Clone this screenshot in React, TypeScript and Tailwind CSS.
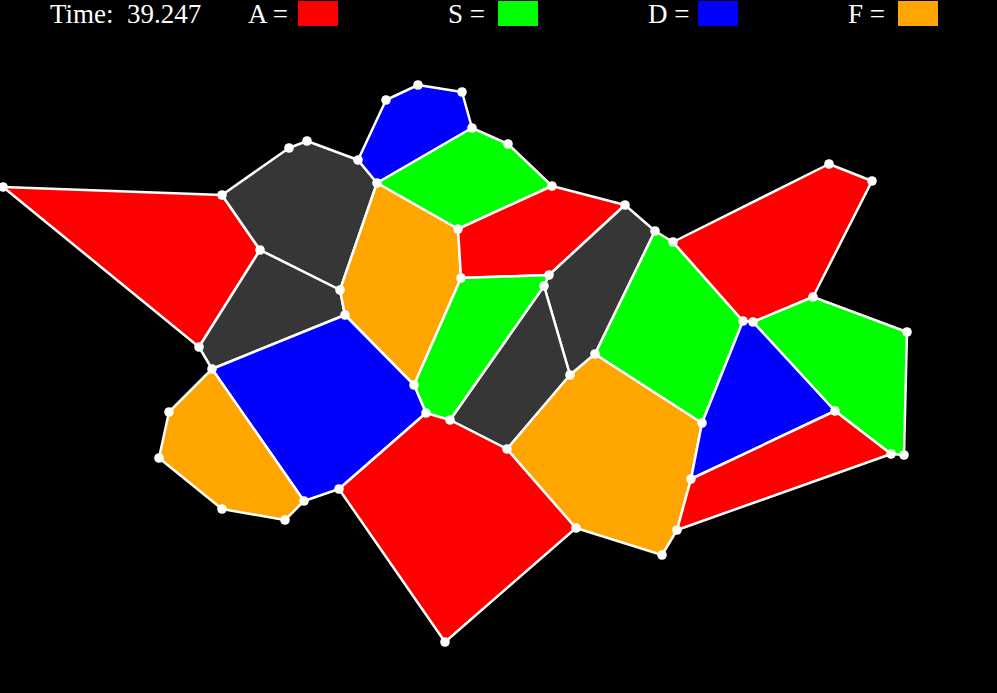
const RED = '#ff0000'
const GREEN = '#00ff00'
const BLUE = '#0000ff'
const ORANGE = '#ffa500'
const GRAY = '#363636'

type Cell = { fill: string; pts: [number, number][] }

// cells of the map, in page coordinates
const CELLS: Cell[] = [
  { fill: RED, pts: [[3, 187], [222, 195], [260, 250], [199, 347]] },
  { fill: GRAY, pts: [[222, 195], [289, 148], [307, 141], [358, 160], [377, 183], [340, 290], [260, 250]] },
  { fill: GRAY, pts: [[260, 250], [340, 290], [345, 315], [212, 369], [199, 347]] },
  { fill: BLUE, pts: [[386, 100], [418, 85], [462, 92], [472, 128], [377, 183], [358, 160]] },
  { fill: GREEN, pts: [[377, 183], [472, 128], [508, 144], [552, 186], [458, 229]] },
  { fill: ORANGE, pts: [[377, 183], [458, 229], [461, 278], [414, 385], [345, 315], [340, 290]] },
  { fill: RED, pts: [[458, 229], [552, 186], [625, 205], [549, 275], [461, 278]] },
  { fill: GRAY, pts: [[625, 205], [655, 231], [595, 354], [570, 375], [544, 286], [549, 275]] },
  { fill: GRAY, pts: [[544, 286], [570, 375], [507, 449], [450, 420]] },
  { fill: GREEN, pts: [[461, 278], [549, 275], [544, 286], [450, 420], [426, 413], [414, 385]] },
  { fill: BLUE, pts: [[212, 369], [345, 315], [414, 385], [426, 413], [339, 489], [304, 501]] },
  { fill: ORANGE, pts: [[212, 369], [304, 501], [285, 520], [222, 509], [159, 458], [169, 412]] },
  { fill: RED, pts: [[339, 489], [426, 413], [450, 420], [507, 449], [576, 528], [445, 642]] },
  { fill: ORANGE, pts: [[507, 449], [570, 375], [595, 354], [702, 423], [691, 479], [677, 530], [662, 555], [576, 528]] },
  { fill: GREEN, pts: [[655, 231], [673, 242], [743, 321], [702, 423], [595, 354]] },
  { fill: RED, pts: [[673, 242], [829, 164], [872, 181], [813, 297], [753, 322], [743, 321]] },
  { fill: GREEN, pts: [[753, 322], [813, 297], [907, 332], [904, 455], [891, 454], [835, 411]] },
  { fill: BLUE, pts: [[743, 321], [753, 322], [835, 411], [691, 479], [702, 423]] },
  { fill: RED, pts: [[691, 479], [835, 411], [891, 454], [677, 530]] },
]

const KEYS = [
  { key: 'A', color: 'bg-[#ff0000]' },
  { key: 'S', color: 'bg-[#00ff00]' },
  { key: 'D', color: 'bg-[#0000ff]' },
  { key: 'F', color: 'bg-[#ffa500]' },
]

function MapCanvas() {
  const seen = new Set<string>()
  const dots: [number, number][] = []
  CELLS.forEach((c) =>
    c.pts.forEach(([x, y]) => {
      const k = `${x},${y}`
      if (!seen.has(k)) {
        seen.add(k)
        dots.push([x, y])
      }
    })
  )

  return (
    <svg width={997} height={663} viewBox="0 30 997 663" className="block">
      {CELLS.map((c, i) => (
        <polygon
          key={i}
          points={c.pts.map((p) => p.join(',')).join(' ')}
          fill={c.fill}
          stroke="#ffffff"
          strokeWidth={2.5}
          strokeLinejoin="round"
        />
      ))}
      {dots.map(([x, y], i) => (
        <circle key={i} cx={x} cy={y} r={4.8} fill="#ffffff" />
      ))}
    </svg>
  )
}

export default function App() {
  return (
    <div className="w-[997px] h-[693px] bg-black overflow-hidden" style={{ fontFamily: '"Liberation Serif", "Times New Roman", serif' }}>
      {/* score bar */}
      <div className="h-[30px] flex items-start pl-[50px] text-white text-[27px] leading-[28px]">
        <div className="w-[198px] whitespace-pre">Time:  39.247</div>
        {KEYS.map((k, i) => (
          <div key={k.key} className={`flex items-start ${i < KEYS.length - 1 ? 'w-[200px]' : ''}`}>
            <span className="w-[50px]">{k.key} =</span>
            <span className={`w-[40px] h-[25px] mt-[1px] ${k.color}`} />
          </div>
        ))}
      </div>

      <MapCanvas />
    </div>
  )
}
